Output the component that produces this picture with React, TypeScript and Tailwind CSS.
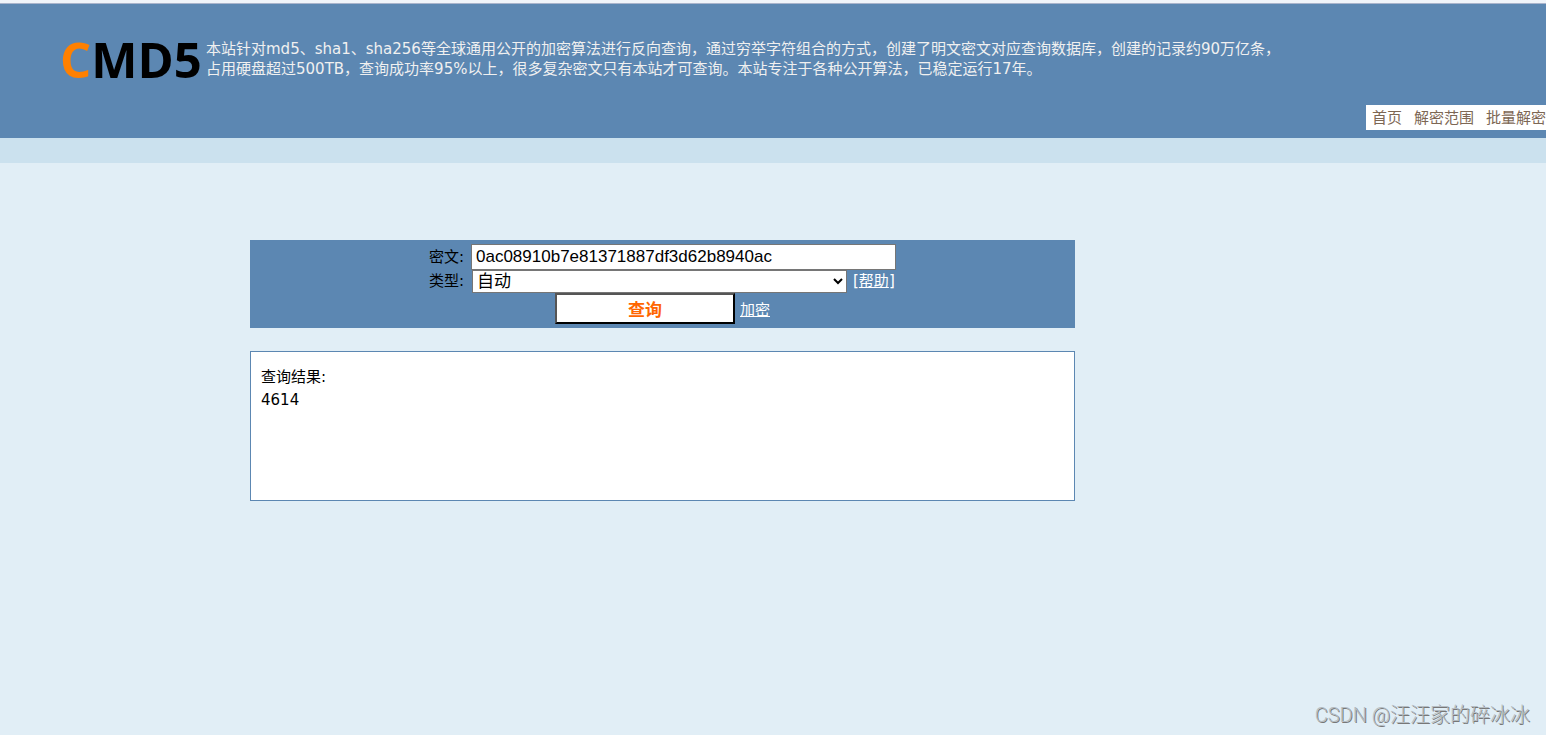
import { useState } from "react"
import type { FormEvent } from "react"

const navItems = ["首页", "解密范围", "批量解密"]

function Header() {
  return (
    <header className="border-t border-[#a9b4cc] bg-[#5c87b2] pb-2">
      <div className="flex items-start gap-1 pt-8 pl-[60px]">
        <h1 className="w-[142px] shrink-0 font-['Open_Sans','Noto_Sans',sans-serif] text-[49px] leading-[46px] font-bold text-black">
          <span className="text-[#ff8000]">C</span>MD5
        </h1>
        <p className="pt-[3px] leading-5 text-[#f0f0f0]">
          本站针对md5、sha1、sha256等全球通用公开的加密算法进行反向查询，通过穷举字符组合的方式，创建了明文密文对应查询数据库，创建的记录约90万亿条，
          <br />
          占用硬盘超过500TB，查询成功率95%以上，很多复杂密文只有本站才可查询。本站专注于各种公开算法，已稳定运行17年。
        </p>
      </div>
      <div className="flex justify-end pt-[23px]">
        <nav className="flex h-[25px] items-center gap-3 bg-white pt-0.5 pl-1.5 text-[#7d6754]">
          {
            navItems.map(it => <a key={it} href="#">{ it }</a>)
          }
        </nav>
      </div>
    </header>
  )
}

type QueryFormProps = {
  onQuery: (hash: string, type: string) => void
}

function QueryForm({ onQuery }: QueryFormProps) {
  const [hash, setHash] = useState("0ac08910b7e81371887df3d62b8940ac")
  const [type, setType] = useState("auto")

  function submit(e: FormEvent) {
    e.preventDefault()
    onQuery(hash, type)
  }

  return (
    <form onSubmit={submit} className="flex flex-col items-center bg-[#5c87b2] py-1">
      <div className="flex flex-col">
        <div className="flex items-center">
          <label htmlFor="hash" className="w-[42px]">密文:</label>
          <input
            id="hash"
            type="text"
            value={hash}
            onChange={e => setHash(e.target.value)}
            className="h-[26px] w-[425px] border border-[#767676] bg-white px-1 font-['Liberation_Sans',sans-serif] text-[17px] text-black"
          />
        </div>
        <div className="flex items-center">
          <label htmlFor="type" className="w-[43px]">类型:</label>
          <select
            id="type"
            value={type}
            onChange={e => setType(e.target.value)}
            className="h-[23px] w-[375px] border border-[#767676] bg-white font-['Liberation_Sans','Noto_Sans_CJK_SC',sans-serif] text-[17px] leading-5 text-black"
          >
            <option value="auto">自动</option>
            <option value="md5">md5</option>
            <option value="sha1">sha1</option>
            <option value="sha256">sha256</option>
          </select>
          <a href="#" className="ml-1.5 text-white">[<span className="underline">帮助</span>]</a>
        </div>
      </div>
      <div className="flex items-center gap-[5px]">
        <button
          type="submit"
          className="h-[31px] w-[180px] border-2 border-t-[#555] border-r-black border-b-black border-l-[#555] bg-white pt-0.5 text-[17px] leading-6 font-bold text-[#ff6600]"
        >
          查询
        </button>
        <a href="#" className="pt-1 text-white underline">加密</a>
      </div>
    </form>
  )
}

function App() {
  const [result, setResult] = useState("4614")

  function query(hash: string) {
    setResult(hash ? "4614" : "")
  }

  return (
    <div className="flex min-h-screen flex-col overflow-x-hidden border-t-[3px] border-[#f0f4fa] bg-[#e1eef6] font-['DejaVu_Sans','Noto_Sans_CJK_SC',sans-serif] text-[15px] leading-[23px] text-black">
      <Header />
      <div className="h-[25px] bg-[#cbe1ee]" />

      <main className="grow pt-[77px] pl-[250px]">
        <div className="flex w-full max-w-[825px] flex-col gap-[23px]">
          <QueryForm onQuery={query} />
          <section className="min-h-[150px] border border-[#5c87b2] bg-white px-2.5 py-3.5">
            <h2>查询结果:</h2>
            <p>{ result }</p>
          </section>
        </div>
      </main>

      <footer className="px-4 pb-1.5 text-right font-['Roboto','Noto_Sans_CJK_SC',sans-serif] text-xl leading-7 font-light text-[#b4bcc2] [text-shadow:1px_1px_0_#777]">
        CSDN @汪汪家的碎冰冰
      </footer>
    </div>
  )
}

export default App
